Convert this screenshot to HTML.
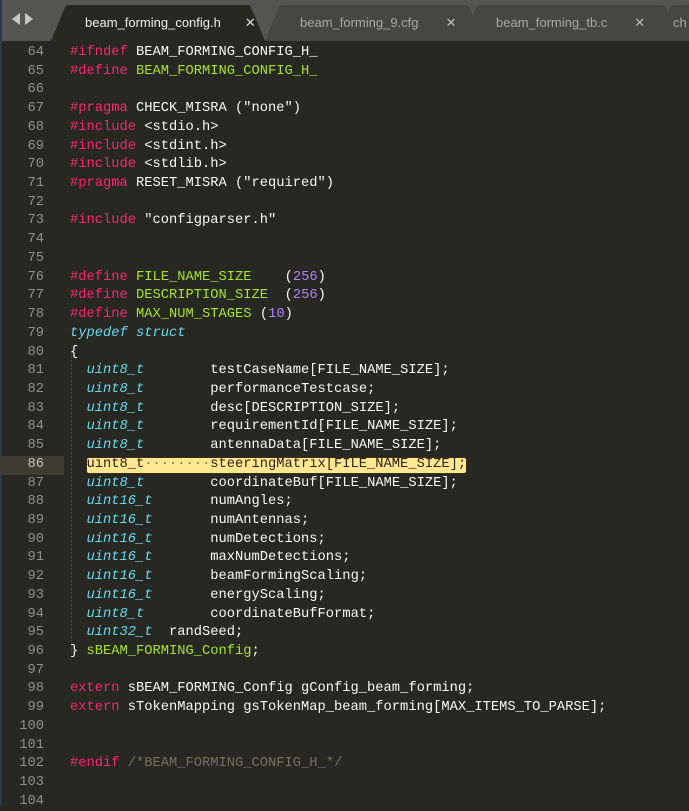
<!DOCTYPE html>
<html><head><meta charset="utf-8"><style>
*{margin:0;padding:0;box-sizing:border-box}
body{width:689px;height:805px;background:#272822;overflow:hidden;position:relative;font-family:"Liberation Mono",monospace}
#tabs{position:absolute;left:0;top:0;width:689px;height:41px;background:#555553}
.tab{position:absolute;top:5px;height:36px;font:13px "Liberation Sans",sans-serif;color:#a8a8a4;line-height:36px}
.tab svg{position:absolute;left:0;top:0}
.tab span{position:relative}
#code{position:absolute;left:0;top:44px;width:689px}
.l{height:18.73px;line-height:18.73px;font-size:13.75px;white-space:pre;position:relative;color:#f8f8f2}
.n{position:absolute;left:0;width:44px;text-align:right;color:#8f908a}
.c{position:absolute;left:70px}
.k{color:#f92672}.g{color:#a6e22e}.t{color:#66d9ef;font-style:italic}.p{color:#ae81ff}.cm{color:#75715e}
.hl .n{color:#c2c2bf}
.gut{position:absolute;left:0;top:0;width:64px;height:100%;background:#3e3d32}
.box{position:absolute;left:86px;top:1px;width:381px;height:17px;background:#ffe792;border:1px solid #3a2f10;border-radius:3px}
.guide{position:absolute;left:71px;top:351px;height:300px;border-left:1px dotted #4a4a44}
</style></head><body>
<div id="tabs">
<div style="position:absolute;left:0;top:0;width:2px;height:805px;background:#2a3a50"></div>
<div style="position:absolute;left:12px;top:13px;width:0;height:0;border-top:6px solid transparent;border-bottom:6px solid transparent;border-right:8px solid #c8c8c4"></div>
<div style="position:absolute;left:25px;top:13px;width:0;height:0;border-top:6px solid transparent;border-bottom:6px solid transparent;border-left:8px solid #c8c8c4"></div>
<div class="tab" style="left:265px;width:230px"><svg width="230" height="36"><path d="M0 36 L14 2 Q15 0 18 0 L200 0 Q203 0 204 2 L218 36Z" fill="#464644"/></svg><span style="left:35px">beam_forming_9.cfg</span><span style="left:62px;color:#bdbdb9">✕</span></div>
<div class="tab" style="left:462px;width:230px"><svg width="230" height="36"><path d="M0 36 L14 2 Q15 0 18 0 L200 0 Q203 0 204 2 L218 36Z" fill="#464644"/></svg><span style="left:34px">beam_forming_tb.c</span><span style="left:61px;color:#bdbdb9">✕</span></div>
<div class="tab" style="left:656px;width:60px"><svg width="60" height="36"><path d="M0 36 L14 2 Q15 0 18 0 L60 0 L60 36Z" fill="#464644"/></svg><span style="left:17px">ch</span></div>
<div class="tab" style="left:51px;width:230px;color:#f0f0ee"><svg width="230" height="36"><path d="M0 36 L14 2 Q15 0 18 0 L196 0 Q199 0 200 2 L214 36Z" fill="#272822"/></svg><span style="left:34px">beam_forming_config.h</span><span style="left:58px;color:#ddd">✕</span></div>
</div>
<div class="guide"></div>
<div id="code">
<div class="l"><span class="n">64</span><span class="c"><span class="k">#ifndef</span> BEAM_FORMING_CONFIG_H_</span></div>
<div class="l"><span class="n">65</span><span class="c"><span class="k">#define</span> <span class="g">BEAM_FORMING_CONFIG_H_</span></span></div>
<div class="l"><span class="n">66</span></div>
<div class="l"><span class="n">67</span><span class="c"><span class="k">#pragma</span> CHECK_MISRA ("none")</span></div>
<div class="l"><span class="n">68</span><span class="c"><span class="k">#include</span> &lt;stdio.h&gt;</span></div>
<div class="l"><span class="n">69</span><span class="c"><span class="k">#include</span> &lt;stdint.h&gt;</span></div>
<div class="l"><span class="n">70</span><span class="c"><span class="k">#include</span> &lt;stdlib.h&gt;</span></div>
<div class="l"><span class="n">71</span><span class="c"><span class="k">#pragma</span> RESET_MISRA ("required")</span></div>
<div class="l"><span class="n">72</span></div>
<div class="l"><span class="n">73</span><span class="c"><span class="k">#include</span> "configparser.h"</span></div>
<div class="l"><span class="n">74</span></div>
<div class="l"><span class="n">75</span></div>
<div class="l"><span class="n">76</span><span class="c"><span class="k">#define</span> <span class="g">FILE_NAME_SIZE</span>    (<span class="p">256</span>)</span></div>
<div class="l"><span class="n">77</span><span class="c"><span class="k">#define</span> <span class="g">DESCRIPTION_SIZE</span>  (<span class="p">256</span>)</span></div>
<div class="l"><span class="n">78</span><span class="c"><span class="k">#define</span> <span class="g">MAX_NUM_STAGES</span> (<span class="p">10</span>)</span></div>
<div class="l"><span class="n">79</span><span class="c"><span class="t">typedef</span> <span class="t">struct</span></span></div>
<div class="l"><span class="n">80</span><span class="c">{</span></div>
<div class="l"><span class="n">81</span><span class="c">  <span class="t">uint8_t</span>        testCaseName[FILE_NAME_SIZE];</span></div>
<div class="l"><span class="n">82</span><span class="c">  <span class="t">uint8_t</span>        performanceTestcase;</span></div>
<div class="l"><span class="n">83</span><span class="c">  <span class="t">uint8_t</span>        desc[DESCRIPTION_SIZE];</span></div>
<div class="l"><span class="n">84</span><span class="c">  <span class="t">uint8_t</span>        requirementId[FILE_NAME_SIZE];</span></div>
<div class="l"><span class="n">85</span><span class="c">  <span class="t">uint8_t</span>        antennaData[FILE_NAME_SIZE];</span></div>
<div class="l hl"><div class="gut"></div><div class="box"></div><span class="n">86</span><span class="c" style="color:#2a2418">  uint8_t<span style="color:#8a7a50">········</span>steeringMatrix[FILE_NAME_SIZE];</span></div>
<div class="l"><span class="n">87</span><span class="c">  <span class="t">uint8_t</span>        coordinateBuf[FILE_NAME_SIZE];</span></div>
<div class="l"><span class="n">88</span><span class="c">  <span class="t">uint16_t</span>       numAngles;</span></div>
<div class="l"><span class="n">89</span><span class="c">  <span class="t">uint16_t</span>       numAntennas;</span></div>
<div class="l"><span class="n">90</span><span class="c">  <span class="t">uint16_t</span>       numDetections;</span></div>
<div class="l"><span class="n">91</span><span class="c">  <span class="t">uint16_t</span>       maxNumDetections;</span></div>
<div class="l"><span class="n">92</span><span class="c">  <span class="t">uint16_t</span>       beamFormingScaling;</span></div>
<div class="l"><span class="n">93</span><span class="c">  <span class="t">uint16_t</span>       energyScaling;</span></div>
<div class="l"><span class="n">94</span><span class="c">  <span class="t">uint8_t</span>        coordinateBufFormat;</span></div>
<div class="l"><span class="n">95</span><span class="c">  <span class="t">uint32_t</span>  randSeed;</span></div>
<div class="l"><span class="n">96</span><span class="c">} <span class="g">sBEAM_FORMING_Config</span>;</span></div>
<div class="l"><span class="n">97</span></div>
<div class="l"><span class="n">98</span><span class="c"><span class="k">extern</span> sBEAM_FORMING_Config gConfig_beam_forming;</span></div>
<div class="l"><span class="n">99</span><span class="c"><span class="k">extern</span> sTokenMapping gsTokenMap_beam_forming[MAX_ITEMS_TO_PARSE];</span></div>
<div class="l"><span class="n">100</span></div>
<div class="l"><span class="n">101</span></div>
<div class="l"><span class="n">102</span><span class="c"><span class="k">#endif</span> <span class="cm">/*BEAM_FORMING_CONFIG_H_*/</span></span></div>
<div class="l"><span class="n">103</span></div>
<div class="l"><span class="n">104</span></div>
</div>
</body></html>
